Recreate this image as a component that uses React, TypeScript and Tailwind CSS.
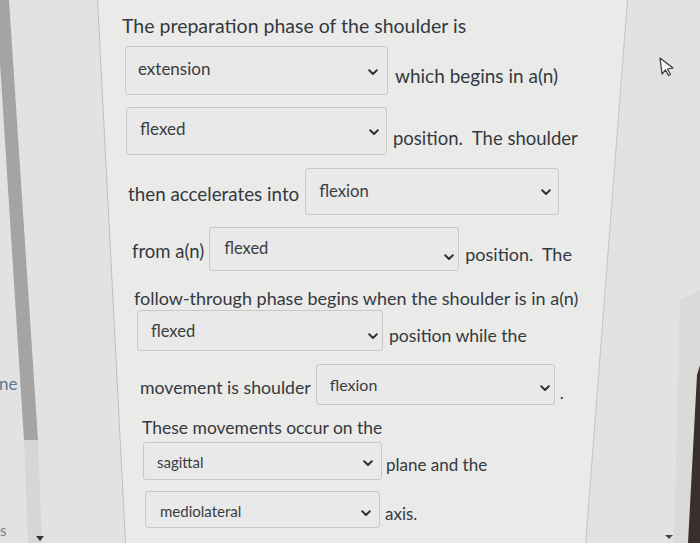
import React from "react";

const Chevron = () => (
  <svg width="10" height="7" viewBox="0 0 10 7" className="block">
    <path d="M1.2 1.3 L5 5 L8.8 1.3" stroke="#2f3236" strokeWidth="2" fill="none" strokeLinecap="round" strokeLinejoin="round" />
  </svg>
);

function Select({
  box,
  label,
  labelCls,
  chevCls,
}: {
  box: string;
  label: string;
  labelCls: string;
  chevCls: string;
}) {
  return (
    <div className={`flex shrink-0 items-start justify-between rounded-[3px] border border-[#c8c8c8] bg-[#e9e9e9] ${box}`}>
      <span className={`text-[#3a3d40] ${labelCls}`}>{label}</span>
      <span className={chevCls}>
        <Chevron />
      </span>
    </div>
  );
}

export default function App() {
  return (
    <div
      className="relative h-[543px] w-[700px] overflow-hidden bg-[#e2e2e1]"
      style={{ fontFamily: "Lato, 'Open Sans', sans-serif" }}
    >
      {/* panel background */}
      <div className="absolute inset-0 bg-[#eaeae9] [clip-path:polygon(97px_0,627px_0,585px_543px,125px_543px)]" />
      {/* panel borders */}
      <div className="absolute left-[97px] top-0 h-[560px] w-px origin-top rotate-[-2.95deg] bg-[#bdbdbd]" />
      <div className="absolute left-[627px] top-0 h-[560px] w-px origin-top rotate-[4.4deg] bg-[#c4c4c4]" />
      {/* left scrollbar */}
      <div className="absolute inset-0 bg-[#a4a4a3] [clip-path:polygon(-4px_0,9px_0,38px_440px,24px_440px)]" />
      <div className="absolute inset-0 bg-[#d6d6d5] [clip-path:polygon(24px_440px,38px_440px,42px_543px,28px_543px)]" />
      <div className="absolute left-[36px] top-[536px] h-0 w-0 border-l-[4px] border-r-[4px] border-t-[5px] border-l-transparent border-r-transparent border-t-[#333]" />
      <div className="absolute left-[-1px] top-[374px] text-[17px] leading-[20px] text-[#5d7892]">ne</div>
      <div className="absolute left-[0px] top-[520px] text-[15px] leading-[20px] text-[#6f8397]">s</div>
      {/* right bezel */}
      <div className="absolute inset-0 bg-[#dadad9] [clip-path:polygon(680px_300px,700px_290px,700px_543px,674px_543px)]" />
      <div className="absolute inset-0 bg-[#3a2f2b] [clip-path:polygon(697px_375px,700px_365px,700px_543px,688px_543px)]" />
      <div className="absolute left-[665px] top-[535px] h-0 w-0 border-l-[4px] border-r-[4px] border-t-[4px] border-l-transparent border-r-transparent border-t-[#444]" />
      {/* cursor */}
      <svg className="absolute left-[658px] top-[56px]" width="18" height="22" viewBox="0 0 18 22">
        <path d="M2 2 L4 18 L7.5 14 L10.5 19.5 L12.5 18.5 L9.5 13 L15 12 Z" fill="#f4f4f4" stroke="#3b3b3b" strokeWidth="1.2" strokeLinejoin="round" />
      </svg>

      <div className="relative flex flex-col pt-[14px] text-[#34393e]">
        <div className="ml-[122px] h-[24px] text-[19.5px] leading-[24px]">The preparation phase of the shoulder is</div>

        <div className="ml-[125px] mt-[8px] flex h-[49px] items-start">
          <Select box="h-[49px] w-[263px]" label="extension" labelCls="ml-[12px] mt-[12px] text-[17px] leading-[20px]" chevCls="mr-[9px] mt-[22px]" />
          <span className="ml-[7px] mt-[18px] text-[19px] leading-[24px]">which begins in a(n)</span>
        </div>

        <div className="ml-[126px] mt-[12px] flex h-[48px] items-start">
          <Select box="h-[48px] w-[261px]" label="flexed" labelCls="ml-[13px] mt-[11px] text-[17px] leading-[20px]" chevCls="mr-[7px] mt-[21px]" />
          <span className="ml-[6px] mt-[19px] whitespace-pre text-[18.5px] leading-[24px]">position.  The shoulder</span>
        </div>

        <div className="ml-[128px] mt-[13px] flex h-[47px] items-start">
          <span className="mt-[14px] text-[18.8px] leading-[24px]">then accelerates into</span>
          <div className="ml-[6px]">
            <Select box="h-[47px] w-[254px]" label="flexion" labelCls="ml-[13px] mt-[12px] text-[16.7px] leading-[20px]" chevCls="mr-[7px] mt-[20px]" />
          </div>
        </div>

        <div className="ml-[132px] mt-[12px] flex h-[44px] items-start">
          <span className="mt-[12px] text-[18.5px] leading-[24px]">from a(n)</span>
          <div className="ml-[5px]">
            <Select box="h-[44px] w-[250px]" label="flexed" labelCls="ml-[14px] mt-[10px] text-[16.5px] leading-[20px]" chevCls="mr-[4px] mt-[26px]" />
          </div>
          <span className="ml-[6px] mt-[15px] whitespace-pre text-[18px] leading-[24px]">position.  The</span>
        </div>

        <div className="ml-[134px] mt-[15px] h-[24px] text-[18px] leading-[24px]">follow-through phase begins when the shoulder is in a(n)</div>

        <div className="ml-[137px] mt-[0px] flex h-[41px] items-start">
          <Select box="h-[41px] w-[246px]" label="flexed" labelCls="ml-[13px] mt-[10px] text-[16.5px] leading-[20px]" chevCls="mr-[4px] mt-[22px]" />
          <span className="ml-[6px] mt-[14px] text-[17.6px] leading-[24px]">position while the</span>
        </div>

        <div className="ml-[140px] mt-[13px] flex h-[41px] items-start">
          <span className="mt-[12px] text-[17.7px] leading-[24px]">movement is shoulder</span>
          <div className="ml-[5px]">
            <Select box="h-[41px] w-[239px]" label="flexion" labelCls="ml-[13px] mt-[10px] text-[16px] leading-[20px]" chevCls="mr-[4px] mt-[20px]" />
          </div>
          <span className="ml-[5px] mt-[17px] text-[17px] leading-[24px]">.</span>
        </div>

        <div className="ml-[142px] mt-[11px] h-[24px] text-[17.5px] leading-[24px]">These movements occur on the</div>

        <div className="ml-[143px] mt-[2px] flex h-[38px] items-start">
          <Select box="h-[38px] w-[239px]" label="sagittal" labelCls="ml-[13px] mt-[9px] text-[15px] leading-[20px]" chevCls="mr-[8px] mt-[17px]" />
          <span className="ml-[4px] mt-[11px] text-[17px] leading-[24px]">plane and the</span>
        </div>

        <div className="ml-[145px] mt-[11px] flex h-[37px] items-start">
          <Select box="h-[37px] w-[235px]" label="mediolateral" labelCls="ml-[14px] mt-[9px] text-[15px] leading-[20px]" chevCls="mr-[8px] mt-[18px]" />
          <span className="ml-[5px] mt-[11px] text-[17px] leading-[24px]">axis.</span>
        </div>
      </div>
    </div>
  );
}
